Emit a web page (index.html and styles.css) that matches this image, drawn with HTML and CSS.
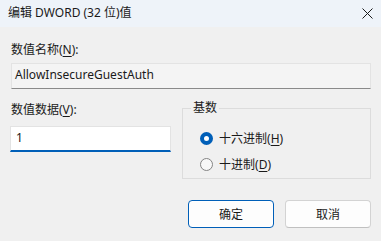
FILE: index.html
```html
<!DOCTYPE html>
<html lang="zh-CN">
<head>
    <meta charset="UTF-8">
    <title>编辑 DWORD (32 位)值</title>
    <link rel="stylesheet" href="styles.css">
</head>
<body>
    <div class="dialog">
        <div class="titlebar">
            <span class="title">编辑 DWORD (32 位)值</span>
            <svg class="close" width="11" height="11" viewBox="0 0 11 11">
                <path d="M0.5 0.5 L10.5 10.5 M10.5 0.5 L0.5 10.5" stroke="#1a1a1a" stroke-width="1"/>
            </svg>
        </div>

        <div class="content">
            <label class="label">数值名称(<u>N</u>):</label>
            <div class="field field-readonly">AllowInsecureGuestAuth</div>

            <div class="row">
                <div class="data-col">
                    <label class="label">数值数据(<u>V</u>):</label>
                    <div class="field field-edit">1</div>
                </div>

                <fieldset class="group">
                    <legend>基数</legend>
                    <div class="radio">
                        <span class="dot dot-on"></span>
                        <span>十六进制(<u>H</u>)</span>
                    </div>
                    <div class="radio">
                        <span class="dot"></span>
                        <span>十进制(<u>D</u>)</span>
                    </div>
                </fieldset>
            </div>

            <div class="buttons">
                <button class="btn btn-default">确定</button>
                <button class="btn">取消</button>
            </div>
        </div>
    </div>
</body>
</html>
```

FILE: styles.css
```css
:root {
    --bg: #f0f0f0;
    --title-bg: #eef3f9;
    --text: #1a1a1a;
    --accent: #005fb8;
    --border: #dcdcdc;
}

* {
    box-sizing: border-box;
}

body {
    margin: 0;
    background: var(--bg);
    font-family: "Noto Sans", "Noto Sans CJK SC", sans-serif;
    font-size: 12px;
    color: var(--text);
}

.dialog {
    width: 381px;
    height: 241px;
    overflow: hidden;
}

.titlebar {
    height: 27px;
    background: var(--title-bg);
    display: flex;
    align-items: center;
    justify-content: space-between;
    padding: 0 8px 1px 8px;
}

.title {
    font-size: 12px;
    line-height: 16px;
}

.close {
    display: block;
}

.content {
    padding: 15px 10px 0 11px;
}

.label {
    display: block;
    line-height: 16px;
}

u {
    text-decoration-thickness: 1px;
    text-underline-offset: 2px;
}

.field {
    height: 26px;
    line-height: 22px;
    padding: 0 3px;
    border: 1px solid #e3e3e3;
}

.field-readonly {
    margin-top: 5px;
    background: #f4f4f4;
    border-bottom-color: #8a8a8a;
}

.field-edit {
    margin-top: 8px;
    margin-left: -1px;
    background: #fff;
    border-bottom: 2px solid var(--accent);
    padding-left: 5px;
}

.row {
    display: flex;
    margin-top: 13px;
}

.data-col {
    width: 161px;
}

.group {
    margin: -2px 0 0 11px;
    width: 190px;
    height: 79px;
    padding: 0 0 0 17px;
    border: 1px solid var(--border);
    border-radius: 0;
}

legend {
    padding: 0 2px;
    line-height: 16px;
    margin-left: -9px;
}

.radio {
    display: flex;
    align-items: center;
    gap: 6px;
    height: 16px;
    margin-top: 14px;
}

.radio + .radio {
    margin-top: 10px;
}

.dot {
    width: 13px;
    height: 13px;
    border-radius: 50%;
    border: 1px solid #848484;
    background: #f8f8f8;
}

.dot-on {
    border: 4px solid var(--accent);
    background: #fff;
}

.buttons {
    display: flex;
    justify-content: flex-end;
    gap: 11px;
    margin-top: 21px;
}

.btn {
    width: 86px;
    height: 28px;
    font-family: inherit;
    font-size: 12px;
    color: var(--text);
    background: #fdfdfd;
    border: 1px solid #d3d3d3;
    border-bottom-color: #c0c0c0;
    border-radius: 4px;
    padding: 0;
}

.btn-default {
    border: 1px solid var(--accent);
    box-shadow: inset 0 0 0 1px #fff;
}
```
